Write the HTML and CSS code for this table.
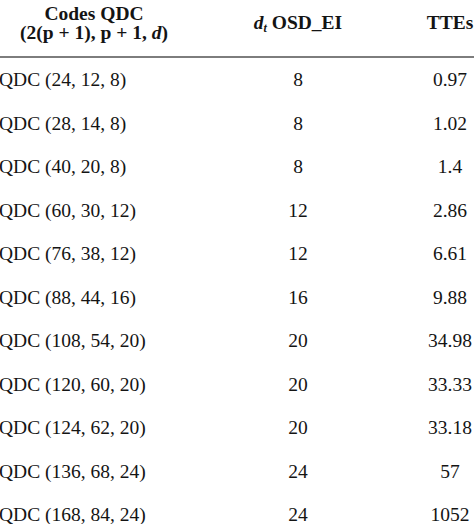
FILE: index.html
```html
<!DOCTYPE html>
<html>
<head>
<meta charset="utf-8">
<link rel="stylesheet" href="styles.css">
</head>
<body>
<table class="qdc">
  <colgroup>
    <col class="c1"><col class="c2"><col class="c3">
  </colgroup>
  <thead>
    <tr>
      <th>Codes QDC<br>(2(p + 1), p + 1, <i>d</i>)</th>
      <th><i>d<sub>t</sub></i> OSD_EI</th>
      <th>TTEs</th>
    </tr>
  </thead>
  <tbody>
    <tr><td>QDC (24, 12, 8)</td><td>8</td><td>0.97</td></tr>
    <tr><td>QDC (28, 14, 8)</td><td>8</td><td>1.02</td></tr>
    <tr><td>QDC (40, 20, 8)</td><td>8</td><td>1.4</td></tr>
    <tr><td>QDC (60, 30, 12)</td><td>12</td><td>2.86</td></tr>
    <tr><td>QDC (76, 38, 12)</td><td>12</td><td>6.61</td></tr>
    <tr><td>QDC (88, 44, 16)</td><td>16</td><td>9.88</td></tr>
    <tr><td>QDC (108, 54, 20)</td><td>20</td><td>34.98</td></tr>
    <tr><td>QDC (120, 60, 20)</td><td>20</td><td>33.33</td></tr>
    <tr><td>QDC (124, 62, 20)</td><td>20</td><td>33.18</td></tr>
    <tr><td>QDC (136, 68, 24)</td><td>24</td><td>57</td></tr>
    <tr><td>QDC (168, 84, 24)</td><td>24</td><td>1052</td></tr>
  </tbody>
</table>
</body>
</html>
```
FILE: styles.css
```css
html, body {
  margin: 0;
  padding: 0;
  background: #ffffff;
  overflow: hidden;
}

.qdc {
  margin-left: -1px;
  border-collapse: collapse;
  table-layout: fixed;
  width: 494px;
  font-family: "Liberation Serif", "Times New Roman", serif;
  font-size: 19.5px;
  color: #141414;
}

.qdc .c1 { width: 190px; }
.qdc .c2 { width: 218px; }
.qdc .c3 { width: 86px; }

.qdc th,
.qdc td {
  padding: 0;
  white-space: nowrap;
}

.qdc thead th {
  height: 52px;
  padding-top: 4px;
  box-sizing: content-box;
  line-height: 19px;
  font-weight: bold;
  text-align: center;
  vertical-align: top;
  border-bottom: 2px solid #7d7d7d;
}

.qdc thead th:nth-child(2),
.qdc thead th:nth-child(3) {
  padding-top: 13px;
  height: 43px;
}

.qdc thead i {
  font-style: italic;
}

.qdc sub {
  font-size: 12px;
  line-height: 0;
  vertical-align: -3px;
}

.qdc tbody td {
  height: 43.5px;
  line-height: 43.5px;
  text-align: center;
  vertical-align: top;
}

.qdc tbody td:first-child {
  text-align: left;
}
```
